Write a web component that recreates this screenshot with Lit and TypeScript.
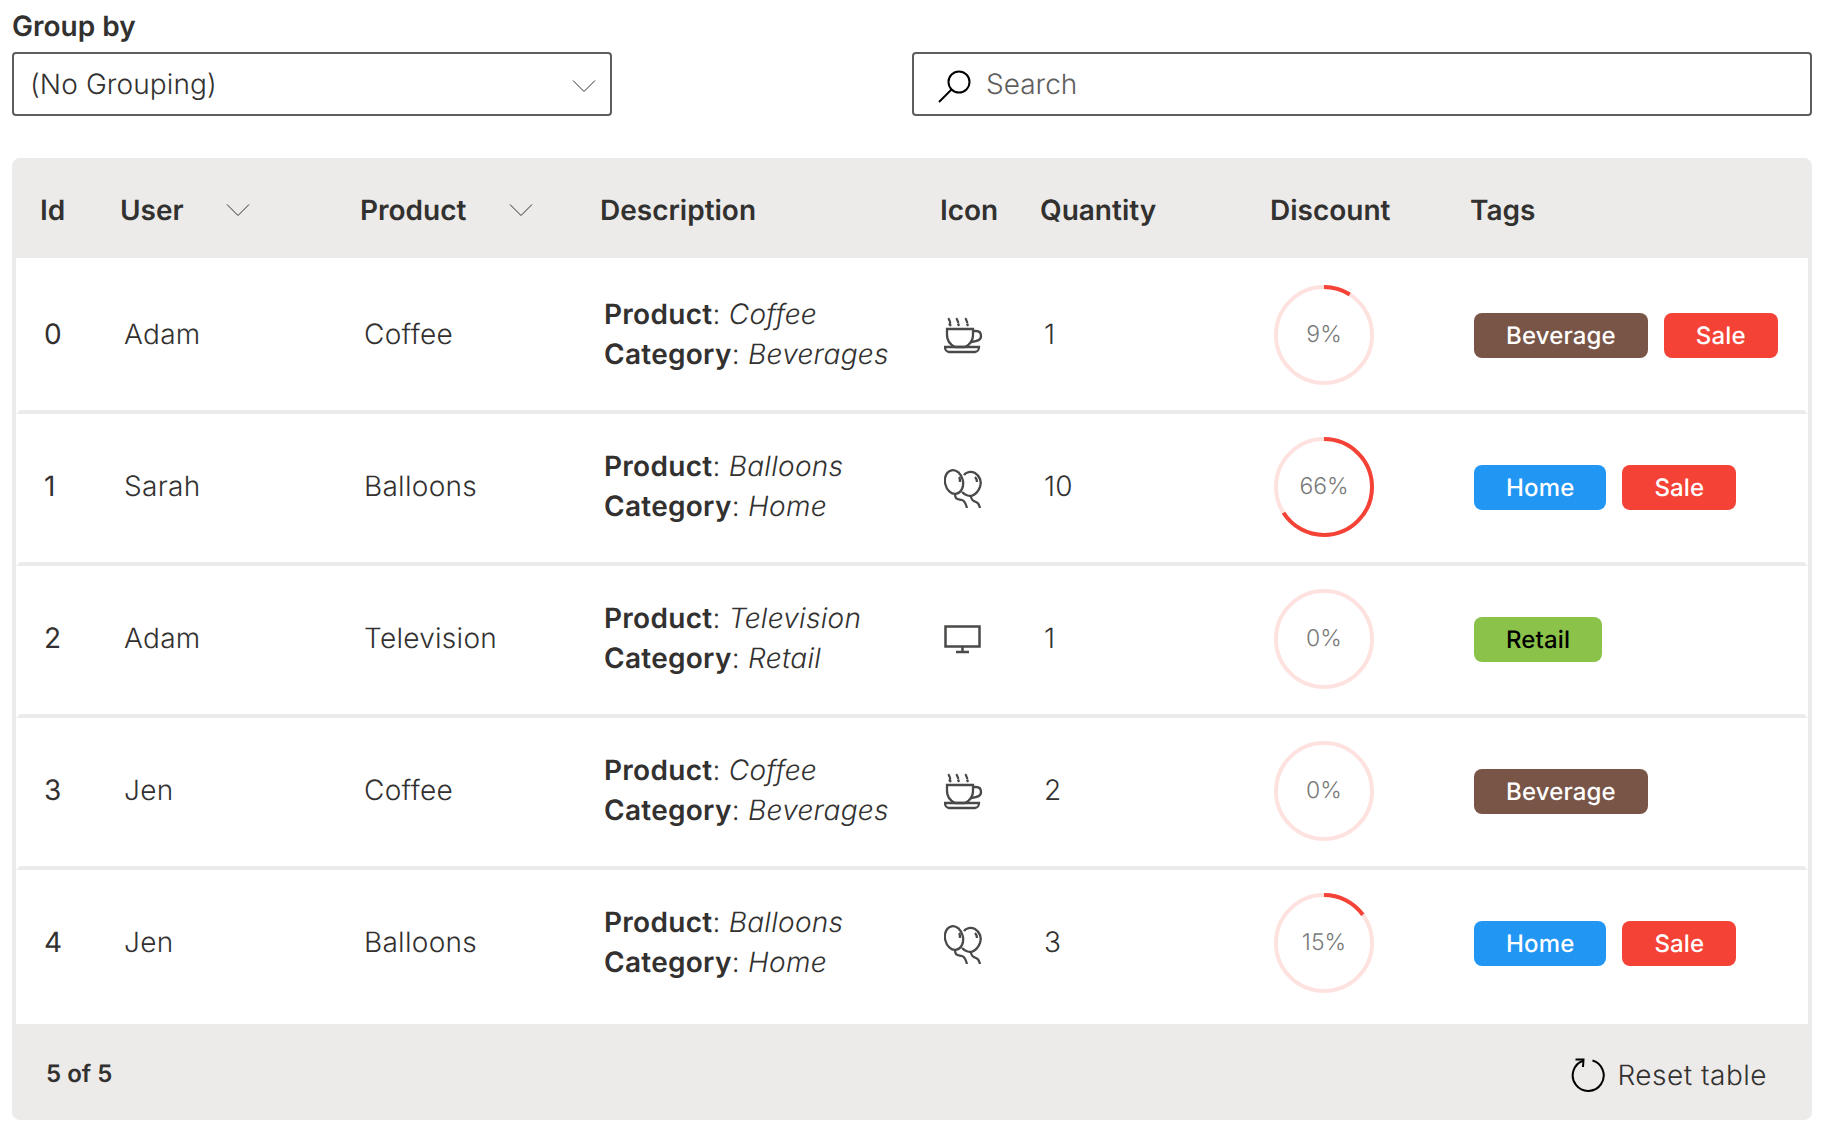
import { LitElement, html, css, svg } from 'lit';
import { customElement } from 'lit/decorators.js';

const rows = [
  { id: 0, user: 'Adam', product: 'Coffee', category: 'Beverages', qty: 1, discount: 9, tags: ['Beverage', 'Sale'] },
  { id: 1, user: 'Sarah', product: 'Balloons', category: 'Home', qty: 10, discount: 66, tags: ['Home', 'Sale'] },
  { id: 2, user: 'Adam', product: 'Television', category: 'Retail', qty: 1, discount: 0, tags: ['Retail'] },
  { id: 3, user: 'Jen', product: 'Coffee', category: 'Beverages', qty: 2, discount: 0, tags: ['Beverage'] },
  { id: 4, user: 'Jen', product: 'Balloons', category: 'Home', qty: 3, discount: 15, tags: ['Home', 'Sale'] },
];

const chevron = html`<svg class="chev" viewBox="0 0 24 14"><path d="M1 1.500 12 12.500 23 1.500" /></svg>`;

const productIcons: Record<string, unknown> = {
  Coffee: svg`
    <path d="M5 2c-1 2 2 3 1 5.500M5 7.500 7 10M13 2c-1 2 2 3 1 5.500M14 7.500 15 10M22 2c-1 2 2 3 1 5.500M23 7.500 24 10" />
    <path d="M3 13H29V19C29 25 25 29 21 31H11C7 29 3 25 3 19Z" />
    <path d="M29 15H32C35 15 37 17 37 20 37 24 34 25 27 26" />
    <path d="M1 31H35C35 34 33 36 31 36H5C3 36 1 34 1 31Z" />`,
  Balloons: svg`
    <ellipse cx="10" cy="14" rx="9" ry="12" transform="rotate(-12 10 14)" />
    <path d="M20 7C22 4 27 3 31 5 36 8 38 14 36 19 34 24 31 27 27 28 23 28 20 26 18 24" />
    <path d="M15 9C16 10 16 12 16 14M31 9C32 10 33 12 33 14" />
    <path d="M11 26C11 32 14 31 18 32 21 33 22 36 23 40M27 28C27 32 29 33 32 34 35 35 35 37 36 40" />`,
  Television: svg`
    <rect x="1.500" y="6.500" width="34" height="20" stroke-width="2.500" />
    <path d="M18.500 27V31M12 32H25" stroke-width="2.500" />`,
};

const tagClass: Record<string, string> = { Beverage: 'brown', Sale: 'red', Home: 'blue', Retail: 'green' };

@customElement('app-root')
export class AppRoot extends LitElement {
  static styles = css`
    :host {
      display: block;
      box-sizing: border-box;
      width: 1822px;
      height: 1130px;
      padding: 0 10px 0 12px;
      background: #fff;
      color: #323130;
      font-family: Inter, 'Noto Sans', sans-serif;
      font-size: 28px;
      font-weight: 300;
      text-rendering: geometricPrecision;
    }
    svg {
      display: block;
      fill: none;
      stroke: #4a4948;
      stroke-width: 2;
    }
    .toolbar {
      display: grid;
      grid-template-columns: 600px 1fr;
      column-gap: 300px;
      align-items: end;
      height: 116px;
    }
    .group-label {
      font-weight: 600;
      line-height: 40px;
      margin-bottom: 6px;
    }
    .field {
      box-sizing: border-box;
      display: flex;
      align-items: center;
      height: 64px;
      border: 2px solid #605e5c;
      border-radius: 4px;
    }
    .select {
      justify-content: space-between;
      padding: 0 14px 0 16px;
      letter-spacing: 0.1px;
    }
    .select .chev {
      margin-top: 3px;
    }
    .search {
      padding: 0 0 0 24px;
      gap: 14px;
      color: #605e5c;
    }
    .search svg,
    .reset svg {
      stroke: #000;
    }
    .chev {
      width: 24px;
      height: 14px;
      stroke: #323130;
      stroke-width: 1;
    }
    .table {
      margin-top: 42px;
      padding: 0 4px;
      border-radius: 8px;
      background: #ecebe9;
    }
    .cols {
      display: grid;
      grid-template-columns: 80px 240px 240px 340px 100px 230px 200px 1fr;
    }
    .head {
      box-sizing: border-box;
      height: 100px;
      padding-top: 4px;
      align-items: center;
      font-weight: 600;
    }
    .head > div {
      display: flex;
      align-items: center;
      padding-left: 24px;
    }
    .head .chev {
      margin-left: 42.500px;
    }
    .body {
      background: #fff;
      padding: 4px 0 6px;
    }
    .row {
      box-sizing: content-box;
      height: 146px;
      padding-bottom: 2px;
      align-items: center;
      border-left: 4px solid #fff;
      border-right: 4px solid #fff;
      border-bottom: 4px solid #ecebe9;
    }
    .row:last-child {
      border-bottom: 0;
    }
    .row > div {
      padding-left: 24px;
      line-height: 40px;
    }
    .row > .text {
      padding-bottom: 3px;
      letter-spacing: 0.280px;
    }
    .row > .id {
      font-weight: 400;
    }
    .desc b {
      font-weight: 600;
    }
    .desc i {
      font-style: italic;
    }
    .row > .icon {
      padding-top: 2px;
    }
    .icon svg {
      width: 40px;
      height: 40px;
      stroke-width: 2.300;
    }
    .ring {
      display: grid;
      place-items: center;
      width: 100px;
      height: 100px;
      font-size: 23px;
      color: #7a7a7a;
    }
    .ring svg,
    .ring span {
      grid-area: 1 / 1;
    }
    .ring span {
      padding-bottom: 2px;
    }
    .ring svg {
      width: 100px;
      height: 100px;
      transform: rotate(-90deg);
      stroke-width: 4;
    }
    .track {
      stroke: #fee2e0;
    }
    .value {
      stroke: #f44336;
    }
    .tags {
      display: flex;
      gap: 16px;
    }
    .tag {
      height: 45px;
      padding: 0 32px;
      border-radius: 8px;
      font-size: 24px;
      font-weight: 500;
      letter-spacing: 0.150px;
      line-height: 45px;
      color: #fff;
    }
    .brown { background: #795548; }
    .red { background: #f44336; }
    .blue { background: #2196f3; }
    .green { background: #8bc34a; color: #000; }
    .foot {
      box-sizing: border-box;
      display: flex;
      align-items: center;
      justify-content: space-between;
      height: 96px;
      padding: 5px 41px 0 30px;
    }
    .count {
      padding-bottom: 2px;
      font-size: 24px;
      font-weight: 600;
    }
    .reset {
      display: flex;
      align-items: center;
      gap: 10px;
      letter-spacing: 0.500px;
    }
    .reset svg {
      width: 36px;
      height: 36px;
    }
  `;

  renderRow(r: (typeof rows)[number]) {
    return html`
      <div class="cols row">
        <div class="text id">${r.id}</div>
        <div class="text">${r.user}</div>
        <div class="text">${r.product}</div>
        <div class="text desc">
          <b>Product</b>: <i>${r.product}</i><br />
          <b>Category</b>: <i>${r.category}</i>
        </div>
        <div class="icon"><svg viewBox="0 0 40 40">${productIcons[r.product]}</svg></div>
        <div class="text">${r.qty}</div>
        <div>
          <div class="ring">
            <svg viewBox="0 0 100 100">
              <circle class="track" cx="50" cy="50" r="48" />
              <circle class="value" cx="50" cy="50" r="48" pathLength="100" stroke-dasharray="${r.discount} 100" />
            </svg>
            <span>${r.discount}%</span>
          </div>
        </div>
        <div class="tags">${r.tags.map((t) => html`<span class="tag ${tagClass[t]}">${t}</span>`)}</div>
      </div>
    `;
  }

  render() {
    return html`
      <div class="toolbar">
        <div>
          <div class="group-label">Group by</div>
          <div class="field select"><span>(No Grouping)</span>${chevron}</div>
        </div>
        <div class="field search">
          <svg width="34" height="38" viewBox="0 0 34 38">
            <circle cx="21" cy="17" r="10.500" />
            <path d="M13.500 24.500 1 37" />
          </svg>
          <span>Search</span>
        </div>
      </div>
      <div class="table">
        <div class="cols head">
          <div>Id</div>
          <div>User${chevron}</div>
          <div>Product${chevron}</div>
          <div>Description</div>
          <div>Icon</div>
          <div>Quantity</div>
          <div>Discount</div>
          <div>Tags</div>
        </div>
        <div class="body">${rows.map((r) => this.renderRow(r))}</div>
        <div class="foot">
          <span class="count">5 of 5</span>
          <span class="reset">
            <svg viewBox="0 0 36 36">
              <path d="M21.500 3.500A15.500 15.500 0 1 1 12 3.800" />
              <path d="M4.500 2.500H12.500L12 10" />
            </svg>
            Reset table
          </span>
        </div>
      </div>
    `;
  }
}
